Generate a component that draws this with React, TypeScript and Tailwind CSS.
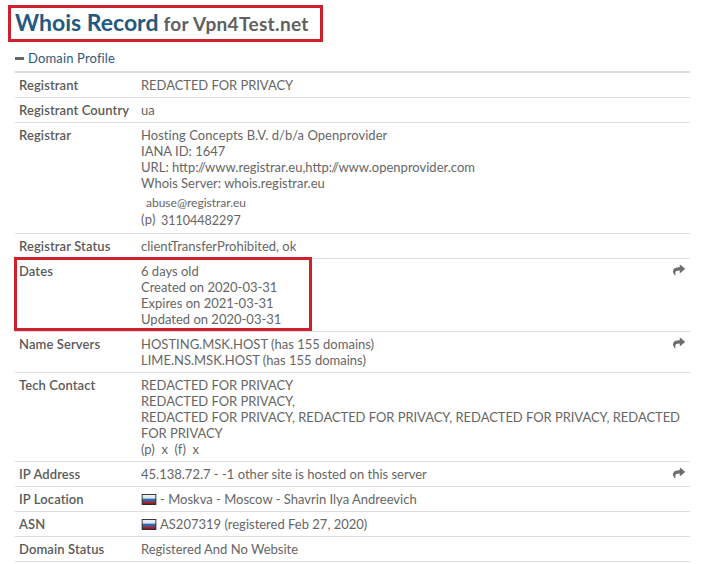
const Share = () => (
  <svg viewBox="0 0 512 512" className="h-[12px] w-[12px] fill-[#6e6e6e]">
    <path d="M503.7 189.8 327.7 37.9C312.3 24.6 288 35.4 288 56v80.1C127.4 137.9 0 170.1 0 322.3c0 61.4 39.6 122.3 83.3 154.1 13.7 9.9 33.1-2.5 28.1-18.6C66 312.3 132.9 274.3 288 272.1V360c0 20.700 24.300 31.400 39.700 18.200l176-152c11.100-9.600 11.100-26.800 0-36.400z" />
  </svg>
);

const Flag = () => (
  <svg viewBox="0 0 16 12" className="mr-[3px] inline-block h-[11px] w-[16px] align-[-1px]">
    <defs>
      <linearGradient id="ruflag" x1="0" y1="0" x2="0" y2="1">
        <stop offset="0" stopColor="#f0f2f5" />
        <stop offset="0.33" stopColor="#dfe6ee" />
        <stop offset="0.5" stopColor="#2f6cb5" />
        <stop offset="0.68" stopColor="#3a5f9c" />
        <stop offset="0.8" stopColor="#b3262c" />
        <stop offset="1" stopColor="#7a1a20" />
      </linearGradient>
    </defs>
    <rect width="16" height="12" fill="#2c2c2c" />
    <rect x="1" y="1" width="14" height="10" fill="url(#ruflag)" />
  </svg>
);

type RowProps = { label: string; children: React.ReactNode; share?: boolean; overlay?: boolean };

const Row = ({ label, children, share, overlay }: RowProps) => (
  <div className="relative flex border-b border-[#ddd] px-1 py-1">
    <div className="w-[122px] shrink-0 font-semibold tracking-[0.1px] text-[#5a5a5a]">{label}</div>
    <div className="min-w-0 flex-1">{children}</div>
    {share && (
      <div className="absolute right-[5px] top-[5px]">
        <Share />
      </div>
    )}
    {overlay && (
      <div className="pointer-events-none absolute left-[-1px] top-[-2px] h-[74px] w-[298px] border-[3px] border-[#d0202e]" />
    )}
  </div>
);

const Slashes = () => <span className="tracking-[-0.8px]">://</span>;

export default function App() {
  return (
    <div className="h-[564px] w-[708px] overflow-hidden bg-white font-['Lato','Noto_Sans',sans-serif] text-[13px] leading-[16px] text-[#666]">
      <div className="pl-[8px] pt-[5px]">
        <h1 className="flex h-[37px] w-[315px] items-baseline border-[3px] border-[#d0202e] pl-[4px] font-bold">
          <span className="text-[23px] leading-[28px] text-[#24597f]">Whois Record</span>
          <span className="ml-[5px] text-[19px] leading-[28px] tracking-[0.35px] text-[#606060]">for Vpn4Test.net</span>
        </h1>
      </div>
      <div className="mt-[8px] flex h-[16px] items-center pl-[15px] tracking-[0.15px] text-[#2d5a78]">
        <span className="mr-[4px] h-[3px] w-[9px] bg-[#666]" />
        <span>Domain Profile</span>
      </div>
      <div className="ml-[15px] mr-[18px] mt-[5px] border-t-2 border-[#ddd]">
        <Row label="Registrant"><span className="tracking-[-0.05px]">REDACTED FOR PRIVACY</span></Row>
        <Row label="Registrant Country">ua</Row>
        <Row label="Registrar">
          <div className="tracking-[0.05px]">Hosting Concepts B.V. d/b/a Openprovider</div>
          <div>IANA ID: 1647</div>
          <div>URL: http<Slashes />www.registrar.eu,http<Slashes />www.openprovider.com</div>
          <div>Whois Server: whois.registrar.eu</div>
          <div className="mt-[4px] pl-[5px] text-[12px]">abuse@registrar.eu</div>
          <div className="flex h-[18px] items-center pt-[2px]">
            <span className="mr-[5px] -translate-y-[2px] tracking-[0.4px]">(p)</span>
            <span className="text-[12.500px]">31104482297</span>
          </div>
        </Row>
        <Row label="Registrar Status">clientTransferProhibited, ok</Row>
        <Row label="Dates" share overlay>
          <div>6 days old</div>
          <div>Created on 2020-03-31</div>
          <div>Expires on 2021-03-31</div>
          <div>Updated on 2020-03-31</div>
        </Row>
        <Row label="Name Servers" share>
          <div>HOSTING.MSK.HOST (has 155 domains)</div>
          <div>LIME.NS.MSK.HOST (has 155 domains)</div>
        </Row>
        <Row label="Tech Contact">
          <div className="tracking-[-0.05px]">REDACTED FOR PRIVACY</div>
          <div className="tracking-[-0.05px]">REDACTED FOR PRIVACY,</div>
          <div className="tracking-[-0.05px]">REDACTED FOR PRIVACY, REDACTED FOR PRIVACY, REDACTED FOR PRIVACY, REDACTED FOR PRIVACY</div>
          <div>(p)&nbsp; x&nbsp; (f)&nbsp; x</div>
        </Row>
        <Row label="IP Address" share>45.138.72.7 - -1 other site is hosted on this server</Row>
        <Row label="IP Location">
          <Flag />- Moskva - Moscow - Shavrin Ilya Andreevich
        </Row>
        <Row label="ASN">
          <Flag />AS207319 (registered Feb 27, 2020)
        </Row>
        <Row label="Domain Status">Registered And No Website</Row>
      </div>
    </div>
  );
}
